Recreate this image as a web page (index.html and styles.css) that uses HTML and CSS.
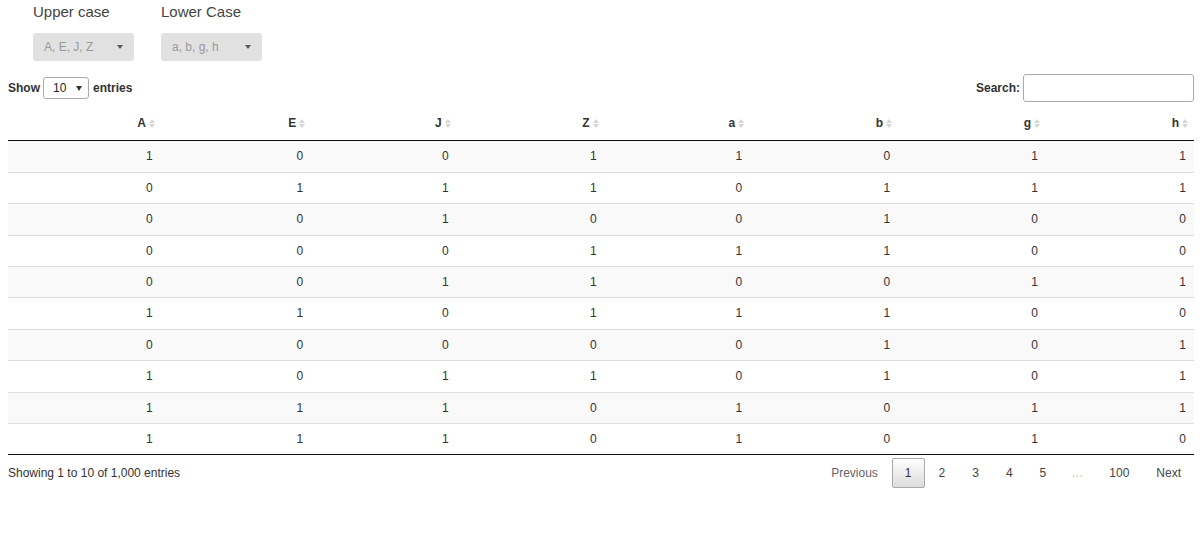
FILE: index.html
```html
<!DOCTYPE html>
<html>
<head>
<meta charset="utf-8">
<link rel="stylesheet" href="styles.css">
</head>
<body>
<div class="page">
  <div class="filters">
    <div class="filter">
      <div class="filter-label">Upper case</div>
      <div class="picker"><span>A, E, J, Z</span><span class="caret"></span></div>
    </div>
    <div class="filter">
      <div class="filter-label">Lower Case</div>
      <div class="picker"><span>a, b, g, h</span><span class="caret"></span></div>
    </div>
  </div>

  <div class="controls">
    <div class="length">Show <span class="select">10<span class="select-caret"></span></span> entries</div>
    <div class="search">Search: <span class="search-input"></span></div>
  </div>

  <table class="data">
    <thead>
      <tr>
        <th><span class="hd">A<span class="sort"></span></span></th>
        <th><span class="hd">E<span class="sort"></span></span></th>
        <th><span class="hd">J<span class="sort"></span></span></th>
        <th><span class="hd">Z<span class="sort"></span></span></th>
        <th><span class="hd">a<span class="sort"></span></span></th>
        <th><span class="hd">b<span class="sort"></span></span></th>
        <th><span class="hd">g<span class="sort"></span></span></th>
        <th><span class="hd">h<span class="sort"></span></span></th>
      </tr>
    </thead>
    <tbody>
      <tr><td>1</td><td>0</td><td>0</td><td>1</td><td>1</td><td>0</td><td>1</td><td>1</td></tr>
      <tr><td>0</td><td>1</td><td>1</td><td>1</td><td>0</td><td>1</td><td>1</td><td>1</td></tr>
      <tr><td>0</td><td>0</td><td>1</td><td>0</td><td>0</td><td>1</td><td>0</td><td>0</td></tr>
      <tr><td>0</td><td>0</td><td>0</td><td>1</td><td>1</td><td>1</td><td>0</td><td>0</td></tr>
      <tr><td>0</td><td>0</td><td>1</td><td>1</td><td>0</td><td>0</td><td>1</td><td>1</td></tr>
      <tr><td>1</td><td>1</td><td>0</td><td>1</td><td>1</td><td>1</td><td>0</td><td>0</td></tr>
      <tr><td>0</td><td>0</td><td>0</td><td>0</td><td>0</td><td>1</td><td>0</td><td>1</td></tr>
      <tr><td>1</td><td>0</td><td>1</td><td>1</td><td>0</td><td>1</td><td>0</td><td>1</td></tr>
      <tr><td>1</td><td>1</td><td>1</td><td>0</td><td>1</td><td>0</td><td>1</td><td>1</td></tr>
      <tr><td>1</td><td>1</td><td>1</td><td>0</td><td>1</td><td>0</td><td>1</td><td>0</td></tr>
    </tbody>
  </table>

  <div class="footer">
    <div class="info">Showing 1 to 10 of 1,000 entries</div>
    <div class="paginate">
      <span class="pbtn disabled">Previous</span>
      <span class="pbtn current">1</span>
      <span class="pbtn">2</span>
      <span class="pbtn">3</span>
      <span class="pbtn">4</span>
      <span class="pbtn">5</span>
      <span class="ellipsis">…</span>
      <span class="pbtn">100</span>
      <span class="pbtn">Next</span>
    </div>
  </div>
</div>
</body>
</html>
```

FILE: styles.css
```css
html, body {
  margin: 0;
  padding: 0;
  background: #fff;
}

body {
  font-family: "Liberation Sans", Arial, Helvetica, sans-serif;
  color: #333;
}

.page {
  padding: 0 6px 0 8px;
}

.filters {
  display: flex;
  gap: 27px;
  padding-left: 25px;
}

.filter-label {
  font-size: 15px;
  line-height: 20px;
  margin-top: 2px;
  color: #444;
}

.picker {
  margin-top: 11px;
  width: 101px;
  height: 28px;
  box-sizing: border-box;
  background: #e1e1e1;
  border-radius: 3px;
  display: flex;
  align-items: center;
  justify-content: space-between;
  padding: 0 11px 0 11px;
  font-size: 12px;
  color: #999;
}

.caret {
  width: 0;
  height: 0;
  border-left: 3px solid transparent;
  border-right: 3px solid transparent;
  border-top: 4px solid #555;
}

.controls {
  display: flex;
  justify-content: space-between;
  align-items: center;
  margin-top: 13px;
  height: 28px;
  font-size: 12px;
  font-weight: bold;
}

.length, .search {
  display: flex;
  align-items: center;
}

.select {
  display: inline-flex;
  align-items: center;
  justify-content: space-between;
  box-sizing: border-box;
  width: 46px;
  height: 22px;
  margin: 0 4px 0 3px;
  padding: 0 6px 0 9px;
  border: 1px solid #aaa;
  border-radius: 3px;
  font-weight: normal;
  color: #222;
  background: #fff;
}

.select-caret {
  width: 0;
  height: 0;
  border-left: 3px solid transparent;
  border-right: 3px solid transparent;
  border-top: 5px solid #333;
}

.search-input {
  display: inline-block;
  box-sizing: border-box;
  width: 171px;
  height: 28px;
  margin-left: 3px;
  border: 1px solid #aaa;
  border-radius: 3px;
  background: #fff;
}

.data {
  width: 100%;
  margin-top: 4px;
  border-collapse: collapse;
  font-size: 12px;
  line-height: 14.4px;
  border-bottom: 1px solid #111;
}

.data th {
  text-align: right;
  font-weight: bold;
  padding: 10px 6px 10px 18px;
  border-bottom: 1px solid #111;
  color: #333;
}

.hd {
  display: inline-flex;
  align-items: center;
  gap: 3px;
}

.sort {
  display: inline-flex;
  flex-direction: column;
  gap: 1px;
  width: 6px;
  align-items: center;
}

.sort::before,
.sort::after {
  content: "";
  width: 0;
  height: 0;
  border-left: 3px solid transparent;
  border-right: 3px solid transparent;
}

.sort::before {
  border-bottom: 4px solid #d6d6d6;
}

.sort::after {
  border-top: 4px solid #d6d6d6;
}

.data td {
  text-align: right;
  padding: 8px 8px 8px 10px;
  border-top: 1px solid #ddd;
  color: #333;
}

.data tbody tr:first-child td {
  border-top: none;
}

.data tbody tr:nth-child(odd) {
  background: #f9f9f9;
}

.footer {
  display: flex;
  justify-content: space-between;
  align-items: flex-start;
  font-size: 12px;
  line-height: 14.4px;
}

.info {
  padding-top: 11px;
  color: #333;
}

.paginate {
  display: flex;
  align-items: center;
  padding-top: 3px;
}

.pbtn {
  box-sizing: border-box;
  display: inline-block;
  padding: 6px 12px;
  line-height: 16px;
  margin-left: 1px;
  border: 1px solid transparent;
  border-radius: 2px;
  color: #444;
  text-align: center;
}

.pbtn.disabled {
  color: #666;
}

.pbtn.current {
  border: 1px solid #a9a9a9;
  background: linear-gradient(to bottom, #ffffff 0%, #dcdcdc 100%);
  color: #333;
}

.ellipsis {
  padding: 0 12px;
  color: #bbb;
}
```
